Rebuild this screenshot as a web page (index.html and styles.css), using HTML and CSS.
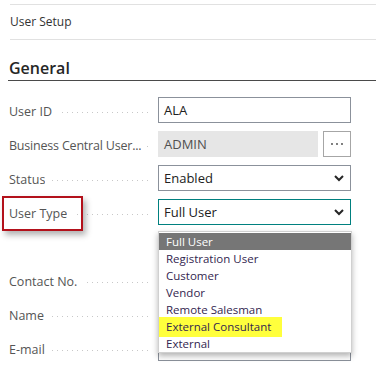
FILE: index.html
```html
<!DOCTYPE html>
<html lang="en">
<head>
  <meta charset="UTF-8">
  <meta name="viewport" content="width=device-width, initial-scale=1.0">
  <title>User Setup</title>
  <link rel="stylesheet" href="styles.css">
</head>
<body>
  <div class="page">
    <div class="caption">User Setup</div>

    <section class="group">
      <h2 class="group-title">General</h2>

      <div class="fields">
        <div class="row">
          <label class="field-label"><span class="text">User ID</span><span class="dots"></span></label>
          <div class="input">ALA</div>
        </div>

        <div class="row">
          <label class="field-label" title="Business Central User Name"><span class="text long">Business Central User...</span><span class="dots"></span></label>
          <div class="lookup">
            <div class="input readonly">ADMIN</div>
            <button class="assist">
              <svg width="14" height="4" viewBox="0 0 14 4"><circle cx="2" cy="2" r="0.9"/><circle cx="7" cy="2" r="0.9"/><circle cx="12" cy="2" r="0.9"/></svg>
            </button>
          </div>
        </div>

        <div class="row">
          <label class="field-label"><span class="text">Status</span><span class="dots"></span></label>
          <div class="input select">Enabled
            <svg class="chevron" width="10" height="7" viewBox="0 0 10 7"><polyline points="1,1 5,5 9,1"/></svg>
          </div>
        </div>

        <div class="row">
          <label class="field-label"><span class="text">User Type</span><span class="dots"></span></label>
          <div class="select-wrap">
            <div class="input select focused">Full User
              <svg class="chevron" width="10" height="7" viewBox="0 0 10 7"><polyline points="1,1 5,5 9,1"/></svg>
            </div>
            <ul class="dropdown">
              <li class="selected"><span>Full User</span></li>
              <li><span>Registration User</span></li>
              <li><span>Customer</span></li>
              <li><span>Vendor</span></li>
              <li><span>Remote Salesman</span></li>
              <li class="marked"><span>External Consultant</span></li>
              <li><span>External</span></li>
            </ul>
          </div>
        </div>

        <div class="row">
          <label class="field-label"></label>
          <div></div>
        </div>

        <div class="row">
          <label class="field-label"><span class="text">Contact No.</span><span class="dots"></span></label>
          <div class="input"></div>
        </div>

        <div class="row">
          <label class="field-label"><span class="text">Name</span><span class="dots"></span></label>
          <div class="input"></div>
        </div>

        <div class="row">
          <label class="field-label"><span class="text">E-mail</span><span class="dots"></span></label>
          <div class="input"></div>
        </div>

        <div class="callout"></div>
      </div>
    </section>
  </div>
</body>
</html>
```

FILE: styles.css
```css
body {
  margin: 0;
  background: #fff;
  font-family: "Segoe UI", "Open Sans", sans-serif;
  color: #212121;
  overflow: hidden;
}

.page {
  padding-top: 4px;
}

.caption {
  margin-left: 10px;
  height: 34px;
  line-height: 34px;
  border-top: 1px solid #e1e1e1;
  border-bottom: 1px solid #e1e1e1;
  font-size: 12px;
  color: #333;
}

.group {
  margin-left: 8px;
}

.group-title {
  margin: 0;
  padding: 17px 0 1px 1px;
  line-height: 22px;
  font-size: 16px;
  font-weight: 600;
  color: #262626;
  border-bottom: 1px solid #4a4a4a;
}

.fields {
  position: relative;
  margin-top: 12px;
  padding-left: 1px;
}

.row {
  display: grid;
  grid-template-columns: 149px 193px;
  align-items: center;
  height: 34px;
}

.field-label {
  display: flex;
  align-items: center;
  padding-right: 10px;
  padding-top: 2px;
  font-size: 12.5px;
  color: #555;
  white-space: nowrap;
  min-width: 0;
}

.field-label .text {
  overflow: hidden;
}

.field-label .long {
  letter-spacing: -0.2px;
}

.dots {
  flex: 1;
  height: 1px;
  margin: 3px 0 0 6px;
  background: repeating-linear-gradient(to left, #c8c8c8 0 1px, transparent 1px 5px);
}

.input {
  position: relative;
  box-sizing: border-box;
  height: 26px;
  line-height: 24px;
  padding: 0 5px;
  border: 1px solid #8b919b;
  font-size: 13px;
  color: #212121;
}

.lookup {
  display: flex;
  gap: 5px;
}

.input.readonly {
  flex: 1;
  border-color: #e6e6e6;
  background: #e6e6e6;
  color: #505050;
}

.assist {
  width: 28px;
  height: 26px;
  padding: 0;
  background: #fff;
  border: 1px solid #a6a6a6;
  display: flex;
  align-items: center;
  justify-content: center;
}

.assist svg {
  fill: #444;
}

.chevron {
  position: absolute;
  right: 6px;
  top: 9px;
  fill: none;
  stroke: #262626;
  stroke-width: 2;
}

.input.focused {
  border-color: #00807f;
}

.select-wrap {
  position: relative;
}

.dropdown {
  position: absolute;
  top: 32px;
  left: 0;
  width: 192px;
  margin: 0;
  padding: 1px 0 0;
  list-style: none;
  background: #fff;
  border: 1px solid #d0d0d0;
  box-shadow: 0 3px 6px rgba(0, 0, 0, 0.3);
  font-size: 11.5px;
  color: #33264f;
  z-index: 2;
}

.dropdown li {
  height: 17px;
  line-height: 17px;
}

.dropdown li span {
  display: inline-block;
  padding: 0 11px 0 7px;
}

.dropdown li.selected {
  background: #767676;
  color: #fff;
}

.dropdown li.marked span {
  background: #ffff3c;
  line-height: 20px;
  margin-top: -2px;
}

.callout {
  position: absolute;
  left: -6px;
  top: 103px;
  width: 77px;
  height: 31px;
  border: 2px solid #b3111b;
  box-shadow: 3px 4px 6px rgba(0, 0, 0, 0.3);
  pointer-events: none;
}
```
